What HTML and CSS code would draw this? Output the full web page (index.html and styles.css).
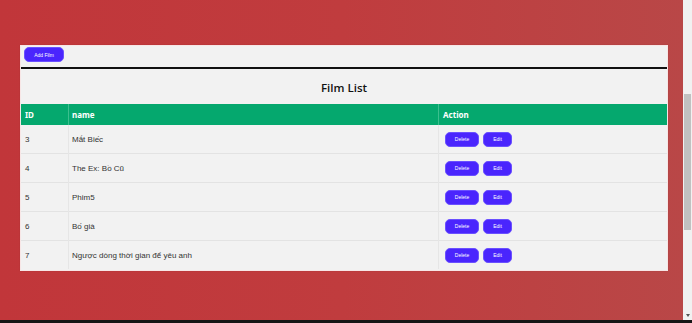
FILE: index.html
```html
<!DOCTYPE html>
<html>
<head>
<meta charset="utf-8">
<link rel="stylesheet" href="styles.css">
</head>
<body>
<div class="window">
  <div class="viewport">
    <div class="page">
      <div class="card">
        <div class="toolbar">
          <button class="btn btn-add">Add Film</button>
        </div>
        <div class="rule"></div>
        <h2 class="title">Film List</h2>
        <table class="films">
          <thead>
            <tr><th class="c-id">ID</th><th class="c-name">name</th><th class="c-act">Action</th></tr>
          </thead>
          <tbody>
            <tr><td>3</td><td>Mắt Biếc</td><td><button class="btn btn-del">Delete</button><button class="btn btn-edit">Edit</button></td></tr>
            <tr><td>4</td><td>The Ex: Bồ Cũ</td><td><button class="btn btn-del">Delete</button><button class="btn btn-edit">Edit</button></td></tr>
            <tr><td>5</td><td>Phim5</td><td><button class="btn btn-del">Delete</button><button class="btn btn-edit">Edit</button></td></tr>
            <tr><td>6</td><td>Bố già</td><td><button class="btn btn-del">Delete</button><button class="btn btn-edit">Edit</button></td></tr>
            <tr><td>7</td><td>Ngược dòng thời gian để yêu anh</td><td><button class="btn btn-del">Delete</button><button class="btn btn-edit">Edit</button></td></tr>
          </tbody>
        </table>
      </div>
    </div>
    <div class="scrollbar">
      <div class="track-top"></div>
      <div class="thumb"></div>
      <div class="track-rest"></div>
      <div class="arrow-down"></div>
    </div>
  </div>
  <div class="bottom-bar"></div>
</div>
</body>
</html>
```
FILE: styles.css
```css
html, body {
  margin: 0;
  padding: 0;
  overflow: hidden;
}
.window {
  width: 692px;
  height: 323px;
  display: flex;
  flex-direction: column;
}
.viewport {
  display: flex;
  height: 320px;
}
.page {
  flex: 1;
  background: linear-gradient(90deg, #c1363a 0%, #c03c3e 50%, #b94747 100%);
  padding: 45px 14px 0 20px;
}
.card {
  width: 646px;
  background: #f2f2f2;
  border: 1px solid #f7e6e6;
  padding: 1px 0 1px 0;
  box-shadow: 0 0 1px rgba(0,0,0,0.15);
}
.toolbar {
  height: 20px;
  padding-left: 3px;
  display: flex;
  align-items: flex-start;
}
.btn {
  font-family: "Liberation Sans", Arial, sans-serif;
  font-size: 5px;
  color: #ffffff;
  background: #4a25fd;
  border: 1px solid #6a50ff;
  border-radius: 5px;
  padding: 0;
  cursor: pointer;
}
.btn-add {
  width: 40px;
  height: 15px;
}
.rule {
  height: 2px;
  background: #111111;
}
.title {
  font-family: "Open Sans", "Noto Sans", sans-serif;
  font-weight: 600;
  font-size: 11.5px;
  color: #111;
  text-align: center;
  margin: 0;
  height: 35px;
  line-height: 37px;
}
.films {
  width: 646px;
  border-collapse: collapse;
  font-family: "Liberation Sans", Arial, sans-serif;
  font-size: 8px;
  color: #333;
}
.films th {
  background: #05a86e;
  color: #fff;
  text-align: left;
  font-family: "Noto Sans", "Open Sans", sans-serif;
  font-weight: 700;
  font-size: 8px;
  height: 21px;
  padding: 0 4px;
  border-left: 1px solid #3cbf8e;
}
.films th:first-child { border-left: none; }
.c-id { width: 39px; }
.c-name { width: 362px; }
.films th.c-name, .films td:nth-child(2) { padding-left: 3px; }
.films td {
  height: 28px;
  padding: 0 4px;
  border-top: 1px solid #e3e3e3;
  border-left: 1px solid #e6e6e6;
}
.films tbody tr:first-child td { border-top: none; }
.films td:first-child { border-left: none; }
.films td:last-child {
  padding-left: 6px;
}
.btn-del {
  width: 34px;
  height: 15px;
  margin-right: 4px;
  vertical-align: middle;
}
.btn-edit {
  width: 29px;
  height: 15px;
  vertical-align: middle;
}
.scrollbar {
  width: 9px;
  background: #f1f1f1;
  display: flex;
  flex-direction: column;
  align-items: center;
}
.track-top { height: 94px; }
.thumb {
  width: 7px;
  height: 136px;
  background: #c1c1c1;
}
.track-rest { flex: 1; }
.arrow-down {
  width: 0;
  height: 0;
  border-left: 2px solid transparent;
  border-right: 2px solid transparent;
  border-top: 3px solid #555;
  margin-bottom: 3px;
}
.bottom-bar {
  height: 3px;
  background: #151515;
}
```
